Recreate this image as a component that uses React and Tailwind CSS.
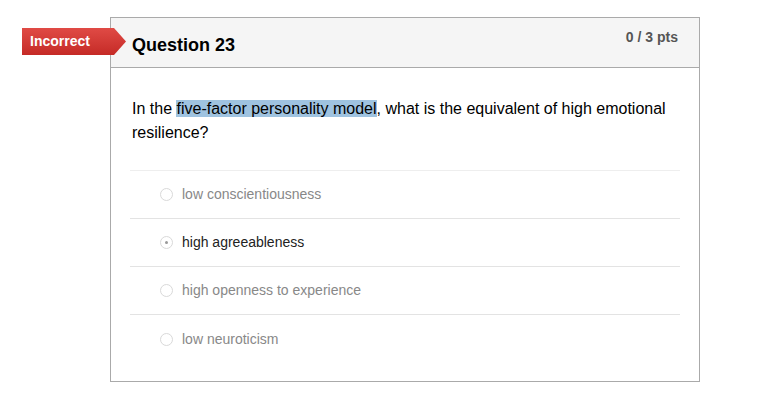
import React from "react";

function Radio({ checked }) {
  return (
    <span className="relative inline-flex h-[13px] w-[13px] shrink-0 items-center justify-center rounded-full border border-[#d9d9d9] bg-white">
      {checked && <span className="h-[3px] w-[3px] rounded-full bg-[#999]" />}
    </span>
  );
}

const answers = [
  { text: "low conscientiousness", checked: false },
  { text: "high agreeableness", checked: true },
  { text: "high openness to experience", checked: false },
  { text: "low neuroticism", checked: false },
];

export default function App() {
  return (
    <div
      className="h-[411px] w-full bg-white pl-[110px] pt-[17px]"
      style={{ fontFamily: '"Liberation Sans", Arial, sans-serif' }}
    >
      <div className="relative w-[590px] border border-[#aaaaaa] bg-white">
        <div className="flex h-[50px] items-start justify-between border-b border-[#aaaaaa] bg-[#f5f5f5] pl-[21px] pr-[21px]">
          <div className="mt-[16px] text-[18px] font-bold leading-[22px] text-black">Question 23</div>
          <div className="mt-[10px] text-[14px] font-bold leading-[18px] text-[#555]">0 / 3 pts</div>
        </div>

        <div className="absolute left-[-89px] top-[10px] flex h-[27px]">
          <div className="flex h-[27px] w-[92px] items-center bg-gradient-to-b from-[#e04a45] to-[#c52a26] pl-[8px] text-[14px] font-bold text-white">
            Incorrect
          </div>
          <svg width="12" height="27" viewBox="0 0 12 27" className="block">
            <defs>
              <linearGradient id="g" x1="0" y1="0" x2="0" y2="1">
                <stop offset="0" stopColor="#e04a45" />
                <stop offset="1" stopColor="#c52a26" />
              </linearGradient>
            </defs>
            <polygon points="0,0 12,13.5 0,27" fill="url(#g)" />
          </svg>
        </div>

        <div className="px-[21px] pt-[29px] text-[16px] leading-[24px] text-black">
          In the <span className="bg-[#9fc3e0]">five-factor personality model</span>, what is the equivalent of high emotional resilience?
        </div>

        <div className="mx-[19px] mb-[18px] mt-[25px] border-t border-[#eeeeee]">
          {answers.map((a, i) => (
            <div
              key={i}
              className={`flex h-[48px] items-center gap-[9px] pl-[30px] text-[14px] ${
                i < answers.length - 1 ? "border-b border-[#e3e3e3]" : ""
              } ${a.checked ? "text-[#222]" : "text-[#888]"}`}
            >
              <Radio checked={a.checked} />
              <span>{a.text}</span>
            </div>
          ))}
        </div>
      </div>
    </div>
  );
}
